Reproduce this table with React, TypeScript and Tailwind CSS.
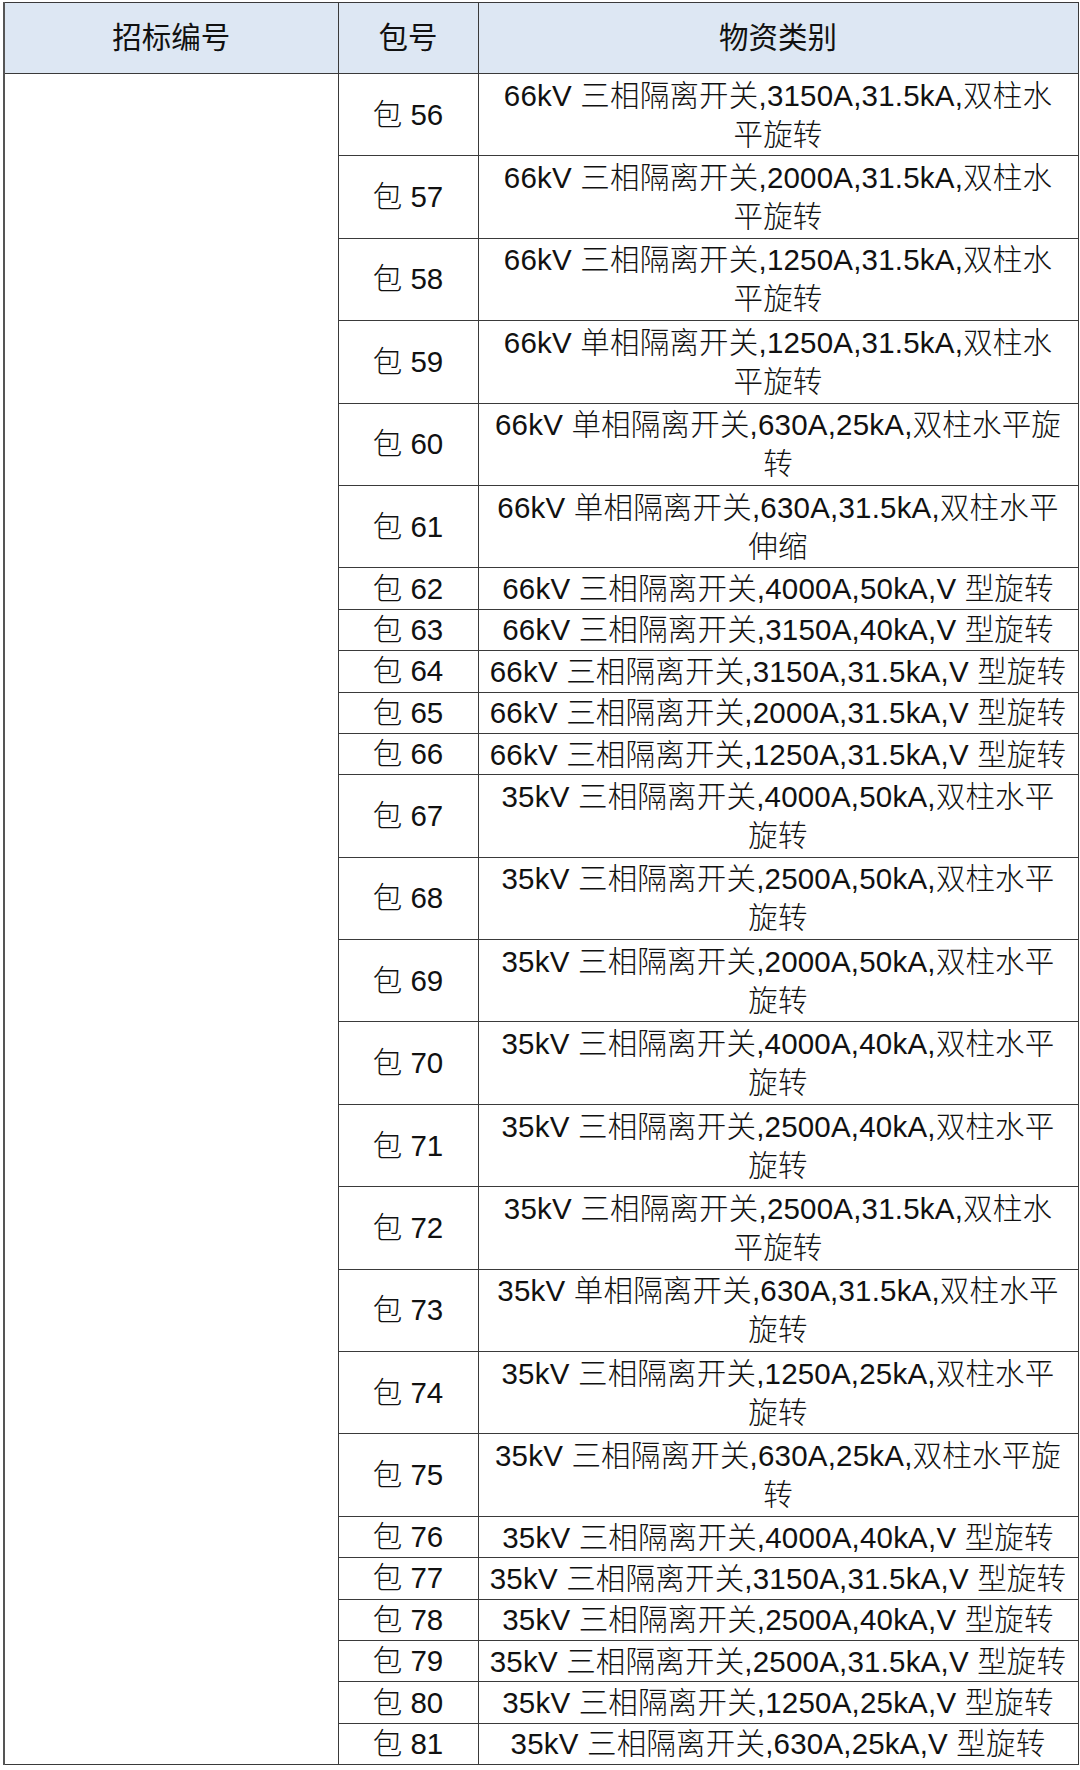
const rows: { pkg: string; lines: string[] }[] = [
  { pkg: "56", lines: ["66kV 三相隔离开关,3150A,31.5kA,双柱水", "平旋转"] },
  { pkg: "57", lines: ["66kV 三相隔离开关,2000A,31.5kA,双柱水", "平旋转"] },
  { pkg: "58", lines: ["66kV 三相隔离开关,1250A,31.5kA,双柱水", "平旋转"] },
  { pkg: "59", lines: ["66kV 单相隔离开关,1250A,31.5kA,双柱水", "平旋转"] },
  { pkg: "60", lines: ["66kV 单相隔离开关,630A,25kA,双柱水平旋", "转"] },
  { pkg: "61", lines: ["66kV 单相隔离开关,630A,31.5kA,双柱水平", "伸缩"] },
  { pkg: "62", lines: ["66kV 三相隔离开关,4000A,50kA,V 型旋转"] },
  { pkg: "63", lines: ["66kV 三相隔离开关,3150A,40kA,V 型旋转"] },
  { pkg: "64", lines: ["66kV 三相隔离开关,3150A,31.5kA,V 型旋转"] },
  { pkg: "65", lines: ["66kV 三相隔离开关,2000A,31.5kA,V 型旋转"] },
  { pkg: "66", lines: ["66kV 三相隔离开关,1250A,31.5kA,V 型旋转"] },
  { pkg: "67", lines: ["35kV 三相隔离开关,4000A,50kA,双柱水平", "旋转"] },
  { pkg: "68", lines: ["35kV 三相隔离开关,2500A,50kA,双柱水平", "旋转"] },
  { pkg: "69", lines: ["35kV 三相隔离开关,2000A,50kA,双柱水平", "旋转"] },
  { pkg: "70", lines: ["35kV 三相隔离开关,4000A,40kA,双柱水平", "旋转"] },
  { pkg: "71", lines: ["35kV 三相隔离开关,2500A,40kA,双柱水平", "旋转"] },
  { pkg: "72", lines: ["35kV 三相隔离开关,2500A,31.5kA,双柱水", "平旋转"] },
  { pkg: "73", lines: ["35kV 单相隔离开关,630A,31.5kA,双柱水平", "旋转"] },
  { pkg: "74", lines: ["35kV 三相隔离开关,1250A,25kA,双柱水平", "旋转"] },
  { pkg: "75", lines: ["35kV 三相隔离开关,630A,25kA,双柱水平旋", "转"] },
  { pkg: "76", lines: ["35kV 三相隔离开关,4000A,40kA,V 型旋转"] },
  { pkg: "77", lines: ["35kV 三相隔离开关,3150A,31.5kA,V 型旋转"] },
  { pkg: "78", lines: ["35kV 三相隔离开关,2500A,40kA,V 型旋转"] },
  { pkg: "79", lines: ["35kV 三相隔离开关,2500A,31.5kA,V 型旋转"] },
  { pkg: "80", lines: ["35kV 三相隔离开关,1250A,25kA,V 型旋转"] },
  { pkg: "81", lines: ["35kV 三相隔离开关,630A,25kA,V 型旋转"] },
];

export default function App() {
  return (
    <div
      className="w-[1080px] h-[1770px] bg-white pt-[2px] pl-[3px] text-[#111] font-light"
      style={{ fontFamily: '"Liberation Sans", "Noto Sans CJK SC", sans-serif' }}
    >
      <table className="border-collapse table-fixed w-[1074px] text-[29.5px]">
        <colgroup>
          <col className="w-[334px]" />
          <col className="w-[140px]" />
          <col className="w-[600px]" />
        </colgroup>
        <thead>
          <tr className="h-[71px] bg-[#dde7f3]">
            <th className="border border-[#3a3a3a] border-l-[#555] border-l-2 font-normal text-center">招标编号</th>
            <th className="border border-[#3a3a3a] font-normal text-center">包号</th>
            <th className="border border-[#3a3a3a] font-normal text-center">物资类别</th>
          </tr>
        </thead>
        <tbody>
          {rows.map((r, i) => (
            <tr key={r.pkg} className={r.lines.length > 1 ? "h-[82.4px]" : "h-[41.4px]"}>
              {i === 0 && (
                <td rowSpan={rows.length} className="border border-[#3a3a3a] border-l-[#555] border-l-2" />
              )}
              <td className="border border-[#3a3a3a] text-center whitespace-nowrap leading-[38px]">
                包 {r.pkg}
              </td>
              <td className="border border-[#3a3a3a] text-center whitespace-nowrap leading-[39px] px-1 tracking-[0.2px]">
                {r.lines.map((l, j) => (
                  <div key={j}>{l}</div>
                ))}
              </td>
            </tr>
          ))}
        </tbody>
      </table>
    </div>
  );
}
